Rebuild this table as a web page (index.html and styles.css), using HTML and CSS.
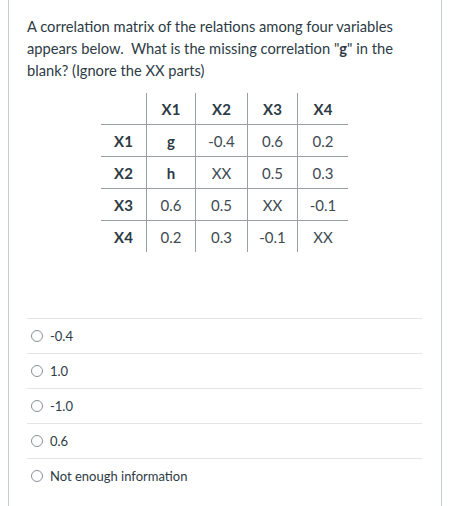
FILE: index.html
```html
<!DOCTYPE html>
<html>
<head>
<meta charset="utf-8">
<link rel="stylesheet" href="styles.css">
</head>
<body>
<div class="card">
  <p class="question">A correlation matrix of the relations among four variables appears below.&nbsp; What is the missing correlation "<b>g</b>" in the blank? (Ignore the XX parts)</p>
  <table class="matrix">
    <tr><th></th><th>X1</th><th>X2</th><th>X3</th><th>X4</th></tr>
    <tr><th>X1</th><td class="strong">g</td><td>-0.4</td><td>0.6</td><td>0.2</td></tr>
    <tr><th>X2</th><td class="strong">h</td><td>XX</td><td>0.5</td><td>0.3</td></tr>
    <tr><th>X3</th><td>0.6</td><td>0.5</td><td>XX</td><td>-0.1</td></tr>
    <tr><th>X4</th><td>0.2</td><td>0.3</td><td>-0.1</td><td>XX</td></tr>
  </table>
  <div class="answers">
    <label class="answer"><span class="radio"></span><span>-0.4</span></label>
    <label class="answer"><span class="radio"></span><span>1.0</span></label>
    <label class="answer"><span class="radio"></span><span>-1.0</span></label>
    <label class="answer"><span class="radio"></span><span>0.6</span></label>
    <label class="answer"><span class="radio"></span><span>Not enough information</span></label>
  </div>
</div>
</body>
</html>
```
FILE: styles.css
```css
html, body {
  margin: 0;
  padding: 0;
  background: #fff;
}
body {
  font-family: Lato, "Open Sans", sans-serif;
  color: #2d3b45;
}
.card {
  box-sizing: border-box;
  margin-left: 8px;
  width: 434px;
  height: 506px;
  border-left: 1px solid #c7cdd1;
  border-right: 1px solid #c7cdd1;
  padding: 15px 19px 0 18px;
}
.question {
  margin: 0;
  font-size: 14.7px;
  line-height: 22px;
}
.question b {
  font-weight: 700;
}
.matrix {
  margin: 12px auto 0;
  border-collapse: collapse;
  font-size: 15px;
}
.matrix th, .matrix td {
  height: 31px;
  padding: 0;
  text-align: center;
  vertical-align: middle;
}
.matrix th {
  font-weight: 700;
}
.matrix td {
  font-weight: 400;
  color: #3d4a53;
}
.matrix td.strong {
  font-weight: 700;
  color: #2d3b45;
}
.matrix tr > :nth-child(1) { width: 45px; }
.matrix tr > :nth-child(2) { width: 48px; }
.matrix tr > :nth-child(3) { width: 51px; }
.matrix tr > :nth-child(4) { width: 49px; }
.matrix tr > :nth-child(5) { width: 50px; }
.matrix tr > :not(:first-child) {
  border-left: 1px solid #9a9fa3;
}
.matrix tr + tr > * {
  border-top: 1px solid #9a9fa3;
}
.answers {
  margin-top: 66px;
}
.answer {
  display: flex;
  align-items: center;
  gap: 7px;
  height: 34px;
  border-top: 1px solid #e2e4e6;
  padding-left: 4px;
  font-size: 13px;
}
.radio {
  box-sizing: border-box;
  width: 12px;
  height: 12px;
  border: 1px solid #8a9095;
  border-radius: 50%;
  flex: none;
}
```
